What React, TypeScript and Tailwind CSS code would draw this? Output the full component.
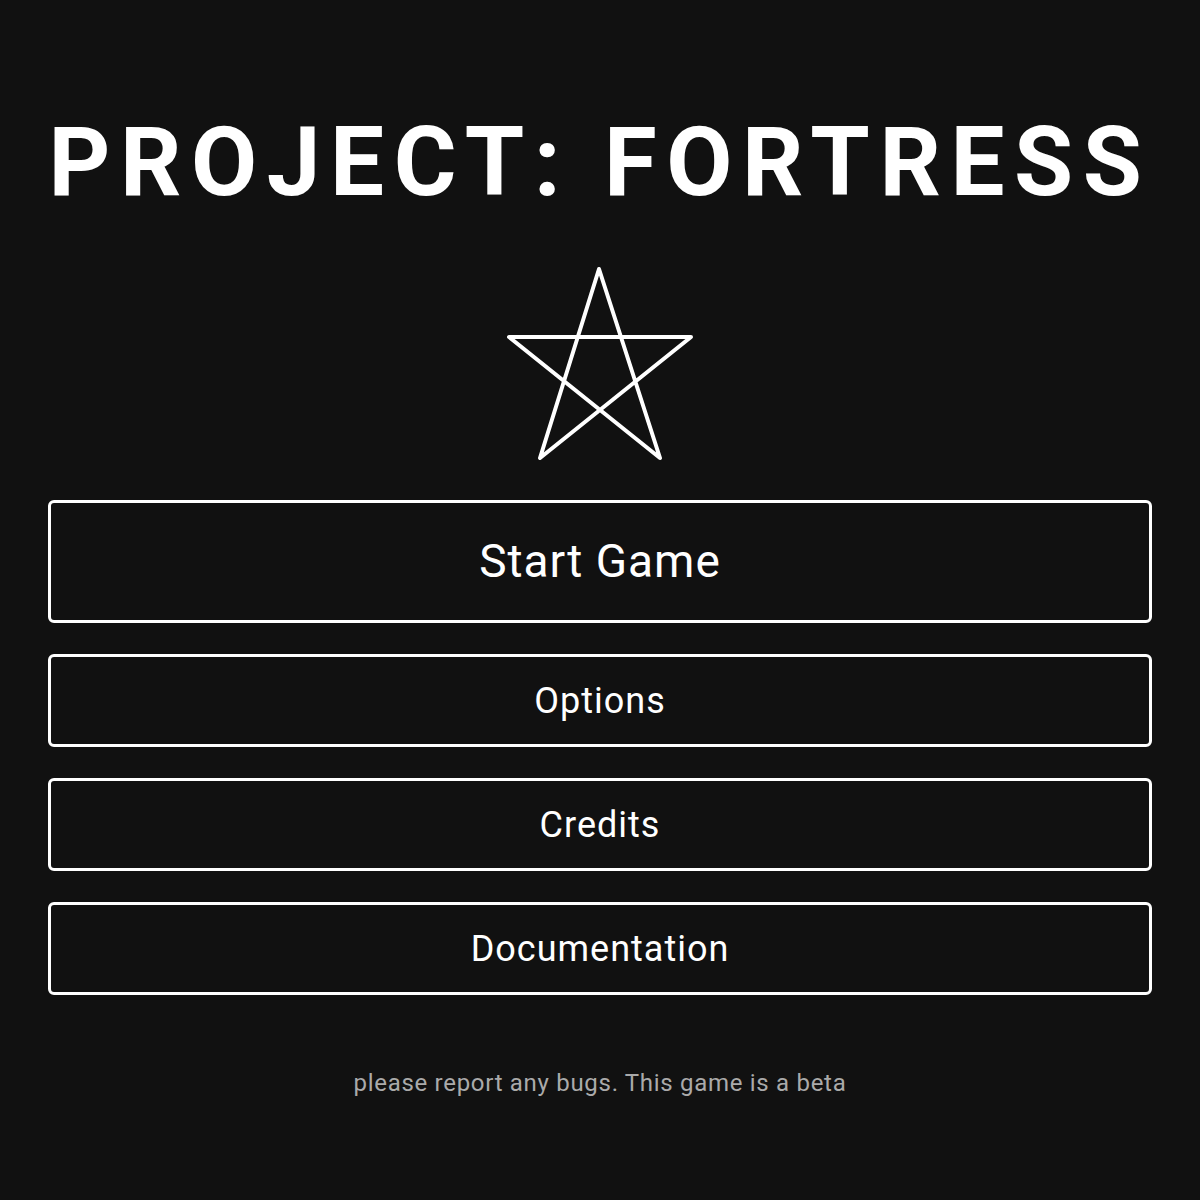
export default function App() {
  const items = ["Options", "Credits", "Documentation"];

  return (
    <div className="min-h-[1200px] w-full bg-[#111111] text-white font-['Roboto','Liberation_Sans',sans-serif]">
      <div className="flex flex-col items-center px-12 pt-[114px]">
        {/* Title */}
        <h1 className="text-[96px] leading-[96px] font-bold tracking-[0.1em] text-white whitespace-nowrap">
          PROJECT: FORTRESS
        </h1>

        {/* Pentagram */}
        <svg
          className="mt-[53px]"
          width="200"
          height="200"
          viewBox="0 0 200 200"
          fill="none"
          stroke="white"
          strokeWidth="4"
          strokeLinejoin="round"
          strokeLinecap="round"
        >
          <polygon points="99,6 160,195 9,74 191,74 40,195" />
        </svg>

        {/* Menu */}
        <div className="mt-[37px] flex w-full flex-col gap-[31px]">
          <button className="flex h-[123px] w-full items-center justify-center rounded-md border-[3px] border-white bg-transparent text-[46px] tracking-[1px] text-white">
            Start Game
          </button>
          {items.map((label) => (
            <button
              key={label}
              className="flex h-[93px] w-full items-center justify-center rounded-md border-[3px] border-white bg-transparent text-[36px] tracking-[1px] text-white"
            >
              {label}
            </button>
          ))}
        </div>

        <p className="mt-[76px] text-[24px] leading-[24px] tracking-[0.7px] text-[#aaaaaa]">
          please report any bugs. This game is a beta
        </p>
      </div>
    </div>
  );
}
